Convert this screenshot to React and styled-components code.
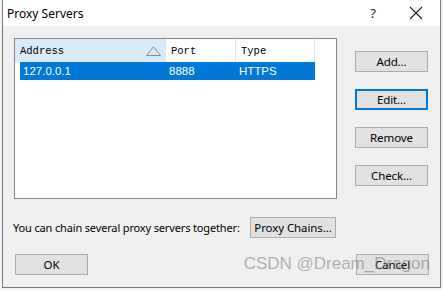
import React from "react";
import styled, { createGlobalStyle } from "styled-components";

const GlobalStyle = createGlobalStyle`
  html, body {
    margin: 0;
    padding: 0;
    background: #f4f4f4;
    font-family: "Noto Sans", "Open Sans", sans-serif;
  }
`;

const columns = [
  { label: "Address", width: 151, sorted: true },
  { label: "Port", width: 70 },
  { label: "Type", width: 79 },
];

const servers = [{ address: "127.0.0.1", port: "8888", type: "HTTPS" }];

const sideButtons = ["Add...", "Edit...", "Remove", "Check..."];

const App = () => {
  return (
    <>
      <GlobalStyle />
      <Screen>
        <Window>
          <TitleBar>
            <Title>Proxy Servers</Title>
            <TitleControls>
              <HelpMark>?</HelpMark>
              <svg width="14" height="14" viewBox="0 0 14 14">
                <path d="M1 1 L13 13 M13 1 L1 13" stroke="#222" strokeWidth="1.1" />
              </svg>
            </TitleControls>
          </TitleBar>

          <Body>
            <TopRow>
              <ListBox>
                <Header>
                  {columns.map((col) => (
                    <HeaderCell key={col.label} $width={col.width} $sorted={col.sorted}>
                      {col.label}
                      {col.sorted && (
                        <SortArrow width="15" height="10" viewBox="0 0 15 10">
                          <path d="M0.5 9.5 L7.5 0.8 L14.5 9.5 Z" fill="none" stroke="#8a8a8a" strokeWidth="1" />
                        </SortArrow>
                      )}
                    </HeaderCell>
                  ))}
                  <HeaderFill />
                </Header>
                {servers.map((s) => (
                  <Row key={s.address} $selected>
                    <Cell $width={146}>{s.address}</Cell>
                    <Cell $width={70}>{s.port}</Cell>
                    <Cell $width={79}>{s.type}</Cell>
                  </Row>
                ))}
              </ListBox>

              <SideButtons>
                {sideButtons.map((label) => (
                  <Button key={label} $focused={label === "Edit..."}>
                    {label}
                  </Button>
                ))}
              </SideButtons>
            </TopRow>

            <ChainRow>
              <ChainText>You can chain several proxy servers together:</ChainText>
              <Button $width={86}>Proxy Chains...</Button>
            </ChainRow>

            <BottomRow>
              <Button>OK</Button>
              <Button>Cancel</Button>
            </BottomRow>
          </Body>

          <Watermark>CSDN @Dream_Dragon</Watermark>
        </Window>
      </Screen>
    </>
  );
};

export default App;

const Screen = styled.div`
  width: 443px;
  height: 290px;
  padding-left: 2px;
  box-sizing: border-box;
  overflow: hidden;
`;

const Window = styled.div`
  position: relative;
  width: 439px;
  height: 288px;
  box-sizing: border-box;
  border: 1px solid #7a7a7a;
  border-top: none;
  background: #f0f0f0;
  display: flex;
  flex-direction: column;
`;

const TitleBar = styled.div`
  height: 26px;
  background: #ffffff;
  display: flex;
  align-items: center;
  justify-content: space-between;
  padding: 0 17px 0 4px;
`;

const Title = styled.div`
  font-size: 12px;
  color: #000;
  padding-top: 1px;
`;

const TitleControls = styled.div`
  display: flex;
  align-items: center;
  gap: 33px;
`;

const HelpMark = styled.span`
  font-size: 13px;
  color: #222;
`;

const Body = styled.div`
  padding: 12px 0 0 11px;
  display: flex;
  flex-direction: column;
`;

const TopRow = styled.div`
  display: flex;
  gap: 18px;
`;

const ListBox = styled.div`
  width: 323px;
  height: 161px;
  box-sizing: border-box;
  border: 1px solid #828790;
  background: #fff;
`;

const Header = styled.div`
  display: flex;
  height: 23px;
`;

const HeaderCell = styled.div`
  position: relative;
  width: ${(p) => p.$width}px;
  box-sizing: border-box;
  padding-left: 5px;
  display: flex;
  align-items: center;
  font-family: "Liberation Mono", "DejaVu Sans Mono", monospace;
  font-size: 10.5px;
  color: #000;
  background: ${(p) => (p.$sorted ? "#d9ebf9" : "#fff")};
  border-right: 1px solid #e5e5e5;
`;

const SortArrow = styled.svg`
  position: absolute;
  right: 4px;
  top: 7px;
`;

const HeaderFill = styled.div`
  flex: 1;
`;

const Row = styled.div`
  display: flex;
  height: 18px;
  margin-left: 5px;
  width: 295px;
  background: ${(p) => (p.$selected ? "#0078d7" : "transparent")};
  color: ${(p) => (p.$selected ? "#fff" : "#000")};
`;

const Cell = styled.div`
  width: ${(p) => p.$width}px;
  box-sizing: border-box;
  padding-left: 3px;
  font-family: "Liberation Sans", Arial, sans-serif;
  font-size: 11.5px;
  line-height: 18px;
`;

const SideButtons = styled.div`
  display: flex;
  flex-direction: column;
  gap: 17px;
  padding-top: 13px;
`;

const Button = styled.div`
  width: ${(p) => p.$width || 73}px;
  height: 21px;
  box-sizing: border-box;
  display: flex;
  align-items: center;
  justify-content: center;
  border: ${(p) => (p.$focused ? "2px solid #0078d7" : "1px solid #adadad")};
  background: #e1e1e1;
  font-size: 11.5px;
  letter-spacing: -0.1px;
  color: #000;
`;

const ChainRow = styled.div`
  display: flex;
  align-items: center;
  margin-top: 18px;
  margin-left: -1px;
`;

const ChainText = styled.span`
  width: 237px;
  font-size: 11px;
  letter-spacing: -0.15px;
  color: #000;
  white-space: nowrap;
`;

const BottomRow = styled.div`
  display: flex;
  justify-content: space-between;
  width: 414px;
  margin-top: 16px;
  margin-left: 1px;
`;

const Watermark = styled.div`
  position: absolute;
  right: 10px;
  bottom: 13px;
  font-family: "Liberation Sans", Arial, sans-serif;
  font-size: 17px;
  color: rgba(110, 110, 110, 0.5);
  pointer-events: none;
`;
